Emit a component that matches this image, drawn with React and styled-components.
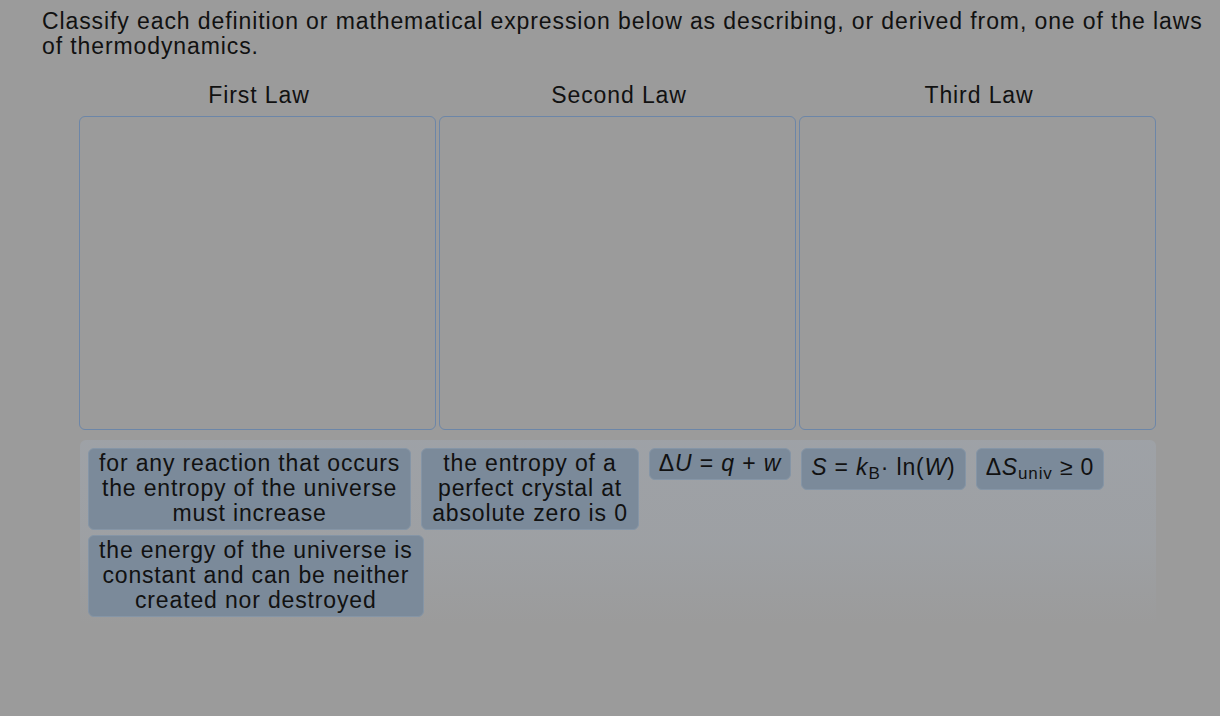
import React from "react";
import styled, { createGlobalStyle } from "styled-components";

const GlobalStyle = createGlobalStyle`
  html, body {
    margin: 0;
    background: #9b9b9b;
  }
  body {
    font-family: "Liberation Sans", Arial, sans-serif;
    color: #111;
  }
`;

const Page = styled.main`
  width: 1220px;
  height: 716px;
  padding-top: 8px;
  box-sizing: border-box;
  font-size: 23px;
  letter-spacing: 0.9px;
  line-height: 25px;
`;

const Prompt = styled.p`
  margin: 0;
  padding: 1px 8px 0 42px;
`;

const Board = styled.section`
  margin: 24px 0 0 79px;
  width: 1077px;
`;

const Columns = styled.div`
  display: grid;
  grid-template-columns: repeat(3, 357px);
  column-gap: 3px;
`;

const Heading = styled.div`
  text-align: center;
  height: 25px;
  margin-bottom: 8px;
  padding-left: 3px;
`;

const Bin = styled.div`
  height: 314px;
  box-sizing: border-box;
  border: 1px solid #6c86a8;
  border-radius: 6px;
`;

const Bank = styled.div`
  margin: 10px 0 0 1px;
  padding: 8px;
  min-height: 170px;
  box-sizing: border-box;
  border-radius: 6px;
  background: linear-gradient(
    to bottom,
    rgba(160, 166, 174, 0.6) 0%,
    rgba(160, 166, 174, 0.45) 55%,
    rgba(160, 166, 174, 0) 100%
  );
  display: flex;
  flex-wrap: wrap;
  align-items: flex-start;
  column-gap: 10px;
  row-gap: 5px;
  letter-spacing: 0.85px;
`;

const Chip = styled.div`
  background: #7b8a9a;
  border: 1px solid #8595a6;
  border-radius: 6px;
  padding: ${(p) => (p.$sub ? "6px 9px 9px" : p.$math ? "2px 9px 3px" : "2px 10px 3px")};
  text-align: center;
  white-space: nowrap;
`;

const Sub = styled.sub`
  font-size: 17px;
  line-height: 0;
  vertical-align: -4px;
`;

const laws = ["First Law", "Second Law", "Third Law"];

export default function App() {
  return (
    <Page>
      <GlobalStyle />
      <Prompt>
        Classify each definition or mathematical expression below as describing, or
        derived from, one of the laws of thermodynamics.
      </Prompt>
      <Board>
        <Columns>
          {laws.map((law) => (
            <Heading key={law}>{law}</Heading>
          ))}
          {laws.map((law) => (
            <Bin key={law + "-bin"} />
          ))}
        </Columns>
        <Bank>
          <Chip>
            for any reaction that occurs
            <br />
            the entropy of the universe
            <br />
            must increase
          </Chip>
          <Chip>
            the entropy of a
            <br />
            perfect crystal at
            <br />
            absolute zero is 0
          </Chip>
          <Chip $math>
            Δ<i>U</i> = <i>q</i> + <i>w</i>
          </Chip>
          <Chip $sub>
            <i>S</i> = <i>k</i>
            <Sub>B</Sub>· ln(<i>W</i>)
          </Chip>
          <Chip $sub>
            Δ<i>S</i>
            <Sub>univ</Sub> ≥ 0
          </Chip>
          <Chip>
            the energy of the universe is
            <br />
            constant and can be neither
            <br />
            created nor destroyed
          </Chip>
        </Bank>
      </Board>
    </Page>
  );
}
